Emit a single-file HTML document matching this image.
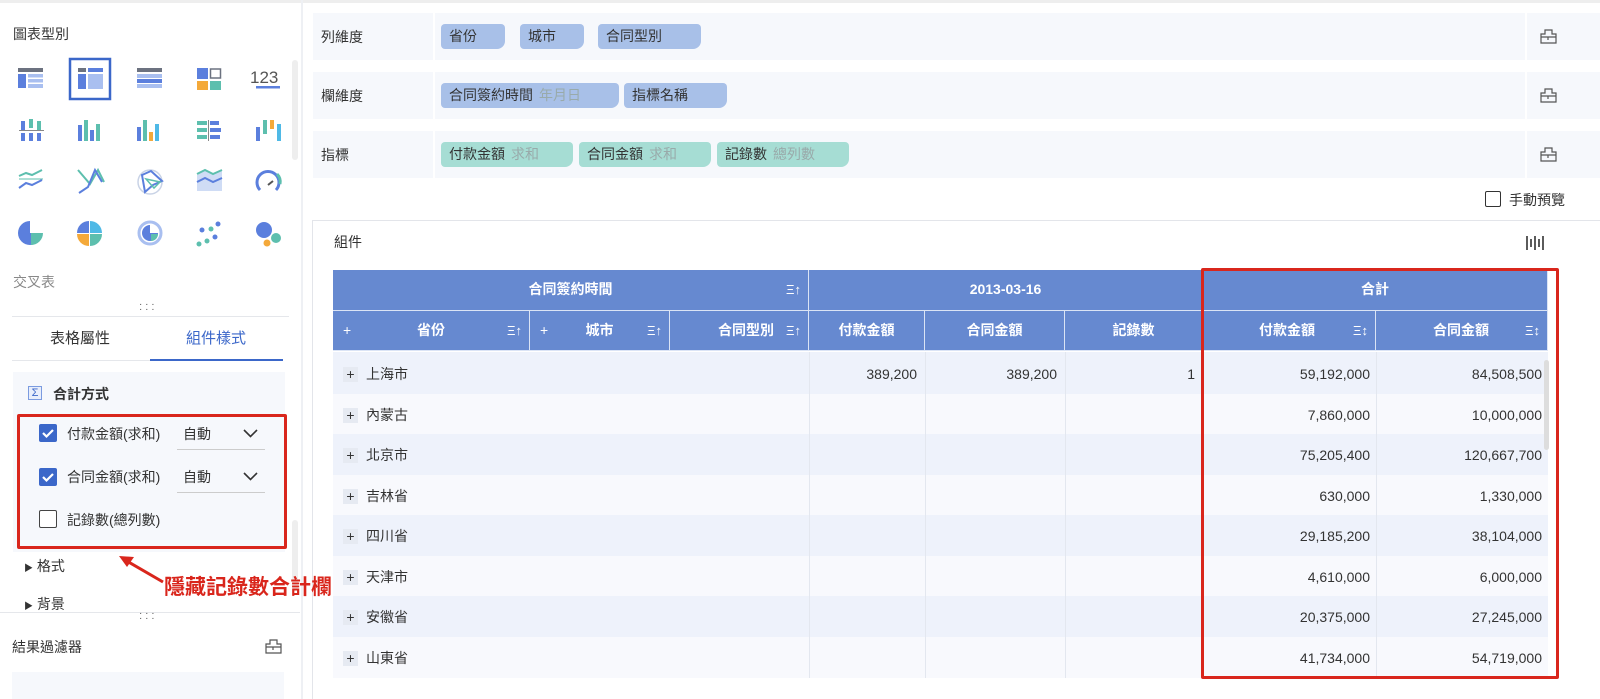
<!DOCTYPE html>
<html><head><meta charset="utf-8"><style>
*{box-sizing:border-box;margin:0;padding:0}
body{width:1600px;height:699px;overflow:hidden;background:#fff;font-family:"Liberation Sans","Noto Sans CJK TC",sans-serif;color:#333;font-size:14px;position:relative}
.a{position:absolute}
.row{position:absolute;left:313px;width:1287px;height:47px;background:#f6f8fc}
.row .lb{position:absolute;left:8px;top:14px;font-size:14px;color:#333}
.row .sep{position:absolute;left:120px;top:0;width:2px;height:47px;background:#fff}
.row .sep2{position:absolute;left:1212px;top:0;width:2px;height:47px;background:#fff}
.chip{position:absolute;top:11px;height:25px;border-radius:4px 4px 8px 4px;font-size:14px;line-height:25px;padding-left:8px;color:#333}
.b{background:#a8c0e8}.g{background:#a6ddd4}
.chip i{font-style:normal;color:#9aa;margin-left:6px}
.th{position:absolute;background:#6689d0;color:#fff;font-size:14px;font-weight:bold;text-align:center;line-height:39px;border-right:1px solid #dbe4f5;border-bottom:1px solid #dbe4f5}
.sort{position:absolute;right:7px;top:0;font-weight:normal;font-size:13px}
.plus{display:inline-block;width:15px;height:15px;line-height:14px;text-align:center;background:#e6eaf2;margin:0 8px 0 10px;font-size:14px}
</style></head><body>
<div class="a" style="left:0;top:0;width:1600px;height:3px;background:#eee"></div>
<div class="a" style="left:13px;top:24px;font-size:14px">圖表型別</div>
<div class="a" style="left:292px;top:60px;width:6px;height:100px;background:#eee;border-radius:3px"></div>
<div class="a" style="left:301px;top:0;width:2px;height:699px;background:#eef0f4"></div>
<svg class="a" style="left:0;top:50px" width="290" height="210">
<g transform="translate(18,18)"><rect width="25" height="4" fill="#6c7280"/><rect y="6" width="8" height="14" fill="#5b7fdd"/><rect x="10" y="6" width="15" height="3.5" fill="#a9bff0"/><rect x="10" y="11" width="15" height="3.5" fill="#a9bff0"/><rect x="10" y="16" width="15" height="4" fill="#a9bff0"/></g>
<rect x="70" y="9" width="40" height="40" fill="none" stroke="#3b67c9" stroke-width="2.5"/>
<g transform="translate(78,18)"><rect width="8" height="4" fill="#6c7280"/><rect x="10" width="15" height="4" fill="#5b7fdd"/><rect y="6" width="8" height="15" fill="#5b7fdd"/><rect x="10" y="6" width="15" height="15" fill="#a9bff0"/></g>
<g transform="translate(137,18)"><rect width="25" height="4" fill="#6c7280"/><rect y="6" width="25" height="4" fill="#a9bff0"/><rect y="11" width="25" height="4" fill="#5b7fdd"/><rect y="16" width="25" height="4" fill="#a9bff0"/></g>
<g transform="translate(197,18)"><rect width="11" height="11" fill="#5b7fdd"/><rect x="13.5" y="1" width="10" height="9" fill="none" stroke="#6c7280" stroke-width="1.5"/><rect y="13" width="11" height="9" fill="#f4a93a"/><rect x="13" y="13" width="11" height="9" fill="#5dbfae"/></g>
<text x="250" y="33" font-size="17" fill="#555" font-family="Liberation Sans">123</text><rect x="256" y="36" width="24" height="2.5" fill="#5b7fdd"/>
<g fill="#5b7fdd"><rect x="21" y="71" width="4" height="9"/><rect x="29" y="69" width="4" height="9" fill="#5dbfae"/><rect x="37" y="71" width="4" height="9" fill="#5dbfae"/><rect x="19" y="80" width="25" height="1" fill="#888"/><rect x="21" y="83" width="4" height="8"/><rect x="29" y="83" width="4" height="8"/><rect x="37" y="83" width="4" height="8"/>
<rect x="78" y="75" width="4" height="16"/><rect x="84" y="70" width="4" height="21" fill="#5dbfae"/><rect x="90" y="80" width="4" height="11"/><rect x="96" y="74" width="4" height="17" fill="#5dbfae"/>
<rect x="137" y="77" width="4" height="14"/><rect x="143" y="70" width="4" height="21" fill="#5dbfae"/><rect x="149" y="82" width="4" height="9" fill="#f4a93a"/><rect x="155" y="74" width="4" height="17" fill="#4fb9e6"/>
<rect x="197" y="71" width="10" height="4" fill="#5dbfae"/><rect x="210" y="71" width="9" height="4"/><rect x="197" y="78" width="10" height="4" fill="#5dbfae"/><rect x="210" y="78" width="11" height="4"/><rect x="197" y="85" width="10" height="4" fill="#5dbfae"/><rect x="210" y="85" width="10" height="4"/><rect x="208" y="70" width="1" height="21" fill="#888"/>
<rect x="256" y="77" width="4" height="14"/><rect x="263" y="70" width="4" height="14" fill="#5dbfae"/><rect x="270" y="70" width="4" height="9" fill="#f4a93a"/><rect x="277" y="74" width="4" height="17" fill="#4fb9e6"/></g>
<g fill="none" stroke-width="2"><path d="M19 126l7-3 6 2 10-5" stroke="#5dbfae"/><path d="M19 129h24" stroke="#5dbfae" stroke-width="1"/><path d="M19 138l7-5 6 2 10-5" stroke="#5b7fdd"/>
<path d="M78 120l12 14 8-14 6 12" stroke="#5dbfae"/><path d="M79 143l9-6 7-17 7 12" stroke="#5b7fdd"/>
<circle cx="150" cy="132" r="12" stroke="#c9d3e6" stroke-width="1.5"/><path d="M142 125l9-4 11 10-9 4-8 7z" stroke="#5b7fdd"/><path d="M146 129l14 3-6 6z" stroke="#5dbfae" stroke-width="1.5"/>
<path d="M197 125l8-4 8 4 9-4v20h-25z" fill="#cfdcf5" stroke="none"/><path d="M197 124l8-4 8 4 9-4" stroke="#5dbfae"/><path d="M197 132l8-4 8 4 9-4" stroke="#5b7fdd"/>
<path d="M260 140a11 11 0 1 1 16 0" stroke="#5b7fdd" stroke-width="3"/><path d="M277 124a11 11 0 0 1 3 10" stroke="#5dbfae" stroke-width="3"/><path d="M268 135l5-4" stroke="#555"/></g>
<path d="M30 171a12 12 0 1 0 12 12h-12z" fill="#5b7fdd"/><path d="M31 183h12a12 12 0 0 1-12 12z" fill="#5dbfae"/>
<path d="M89 171a12 12 0 0 0-12 12h12z" fill="#5b7fdd"/><path d="M90 171a12 12 0 0 1 12 12h-12z" fill="#4fb9e6"/><path d="M77 184a12 12 0 0 0 12 12v-12z" fill="#f4a93a"/><path d="M90 184h12a12 12 0 0 1-12 12z" fill="#5dbfae"/>
<circle cx="150" cy="183" r="11" fill="none" stroke="#a9bff0" stroke-width="3"/><path d="M150 175a8 8 0 1 0 8 8h-8z" fill="#5b7fdd"/><path d="M151 184h7a7 7 0 0 1-7 7z" fill="#5dbfae"/>
<g fill="#5b7fdd"><circle cx="218" cy="174" r="2.5"/><circle cx="202" cy="180" r="2.5"/><circle cx="215" cy="187" r="2.5"/><circle cx="199" cy="194" r="2.5" fill="#5dbfae"/><circle cx="207" cy="191" r="2.5" fill="#5dbfae"/><circle cx="211" cy="179" r="2.5" fill="#5dbfae"/></g>
<circle cx="264" cy="180" r="8" fill="#5b7fdd"/><circle cx="276" cy="188" r="5" fill="#5dbfae"/><circle cx="267" cy="193" r="3.5" fill="#f4a93a"/>
</svg>
<div class="a" style="left:13px;top:272px;color:#888">交叉表</div>
<div class="a" style="left:12px;top:316px;width:277px;height:1px;background:#e5e7eb"></div>
<div class="a" style="left:139px;top:302px;font-size:10px;line-height:5px;color:#555">· · ·<br>· · ·</div>
<div class="a" style="left:50px;top:327px;font-size:15px">表格屬性</div>
<div class="a" style="left:186px;top:327px;font-size:15px;color:#3b67c9">組件樣式</div>
<div class="a" style="left:12px;top:360px;width:271px;height:1px;background:#e5e7eb"></div>
<div class="a" style="left:150px;top:359px;width:133px;height:2px;background:#3b67c9"></div>
<div class="a" style="left:13px;top:372px;width:272px;height:180px;background:#f6f8fc"></div>
<div class="a" style="left:28px;top:386px;width:14px;height:14px;border:1px solid #7b9be0;background:#e8eefb;font-size:11px;line-height:12px;text-align:center;color:#3b67c9">Σ</div>
<div class="a" style="left:53px;top:384px;font-weight:bold;font-size:14px">合計方式</div>
<div class="a" style="left:17px;top:414px;width:270px;height:135px;border:3px solid #d9261c;border-radius:2px"></div>
<svg class="a" style="left:39px;top:424px" width="18" height="18"><rect width="18" height="18" rx="2" fill="#3b67c9"/><path d="M4 9l3.5 3.5L14 6" fill="none" stroke="#fff" stroke-width="2.2"/></svg>
<div class="a" style="left:67px;top:424px;font-size:14px">付款金額(求和)</div>
<div class="a" style="left:183px;top:424px;font-size:14px">自動</div>
<svg class="a" style="left:243px;top:429px" width="15" height="9"><path d="M1 1l6.5 6.5L14 1" fill="none" stroke="#333" stroke-width="1.6"/></svg>
<div class="a" style="left:177px;top:449px;width:88px;height:1px;background:#ccc"></div>
<svg class="a" style="left:39px;top:468px" width="18" height="18"><rect width="18" height="18" rx="2" fill="#3b67c9"/><path d="M4 9l3.5 3.5L14 6" fill="none" stroke="#fff" stroke-width="2.2"/></svg>
<div class="a" style="left:67px;top:467px;font-size:14px">合同金額(求和)</div>
<div class="a" style="left:183px;top:467px;font-size:14px">自動</div>
<svg class="a" style="left:243px;top:472px" width="15" height="9"><path d="M1 1l6.5 6.5L14 1" fill="none" stroke="#333" stroke-width="1.6"/></svg>
<div class="a" style="left:177px;top:492px;width:88px;height:1px;background:#ccc"></div>
<div class="a" style="left:39px;top:510px;width:18px;height:18px;border:1.5px solid #444;border-radius:2px;background:#fff"></div>
<div class="a" style="left:67px;top:510px;font-size:14px">記錄數(總列數)</div>
<div class="a" style="left:292px;top:520px;width:6px;height:70px;background:#eee;border-radius:3px"></div>
<div class="a" style="left:24px;top:556px;font-size:14px"><span style="font-size:9px">▶</span> 格式</div>
<div class="a" style="left:24px;top:594px;font-size:14px"><span style="font-size:9px">▶</span> 背景</div>
<div class="a" style="left:0;top:612px;width:300px;height:1px;background:#e5e7eb"></div>
<div class="a" style="left:139px;top:611px;font-size:10px;line-height:5px;color:#555">· · ·<br>· · ·</div>
<div class="a" style="left:12px;top:637px;font-size:14px">結果過濾器</div>
<svg class="a" style="left:265px;top:639px" width="17" height="15"><path d="M5 1h7v4h4v9H1V5h4z M1 8h15 M8 8v3" fill="none" stroke="#555" stroke-width="1.2"/></svg>
<div class="a" style="left:12px;top:672px;width:272px;height:27px;background:#f6f8fc"></div>
<div class="row" style="top:13px"><div class="lb">列維度</div><div class="sep"></div><div class="sep2"></div>
<div class="chip b" style="left:128px;width:64px">省份</div><div class="chip b" style="left:207px;width:64px">城市</div><div class="chip b" style="left:285px;width:103px">合同型別</div>
<svg class="a" style="left:1227px;top:16px" width="17" height="15"><path d="M5 1h7v4h4v9H1V5h4z M1 8h15 M8 8v3" fill="none" stroke="#555" stroke-width="1.2"/></svg></div>
<div class="row" style="top:72px"><div class="lb">欄維度</div><div class="sep"></div><div class="sep2"></div>
<div class="chip b" style="left:128px;width:178px">合同簽約時間<i>年月日</i></div><div class="chip b" style="left:311px;width:103px">指標名稱</div>
<svg class="a" style="left:1227px;top:16px" width="17" height="15"><path d="M5 1h7v4h4v9H1V5h4z M1 8h15 M8 8v3" fill="none" stroke="#555" stroke-width="1.2"/></svg></div>
<div class="row" style="top:131px"><div class="lb">指標</div><div class="sep"></div><div class="sep2"></div>
<div class="chip g" style="left:128px;width:132px">付款金額<i>求和</i></div><div class="chip g" style="left:266px;width:132px">合同金額<i>求和</i></div><div class="chip g" style="left:404px;width:132px">記錄數<i>總列數</i></div>
<svg class="a" style="left:1227px;top:16px" width="17" height="15"><path d="M5 1h7v4h4v9H1V5h4z M1 8h15 M8 8v3" fill="none" stroke="#555" stroke-width="1.2"/></svg></div>
<div class="a" style="left:1485px;top:191px;width:16px;height:16px;border:1.5px solid #333;border-radius:2px"></div>
<div class="a" style="left:1509px;top:190px;font-size:14px;white-space:nowrap">手動預覽</div>
<div class="a" style="left:312px;top:220px;width:1288px;height:1px;background:#e3e5ea"></div>
<div class="a" style="left:312px;top:220px;width:1px;height:479px;background:#e3e5ea"></div>
<div class="a" style="left:334px;top:232px;font-size:14px">組件</div>
<svg class="a" style="left:1526px;top:235px" width="18" height="16"><path d="M1 1v14M5 4v8M9 1v14M13 4v8M17 1v14" stroke="#333" stroke-width="1.6"/></svg>
<div class="th" style="left:333px;top:270px;width:476px;height:41px">合同簽約時間<span class="sort">Ξ↑</span></div>
<div class="th" style="left:809px;top:270px;width:394px;height:41px">2013-03-16</div>
<div class="th" style="left:1203px;top:270px;width:345px;height:41px">合計</div>
<div class="th" style="left:333px;top:311px;width:197px;height:40px"><span style="position:absolute;left:10px;font-weight:normal">+</span>省份<span class="sort">Ξ↑</span></div>
<div class="th" style="left:530px;top:311px;width:140px;height:40px"><span style="position:absolute;left:10px;font-weight:normal">+</span>城市<span class="sort">Ξ↑</span></div>
<div class="th" style="left:670px;top:311px;width:139px;height:40px;text-align:right;padding-right:34px">合同型別<span class="sort">Ξ↑</span></div>
<div class="th" style="left:809px;top:311px;width:116px;height:40px">付款金額</div>
<div class="th" style="left:925px;top:311px;width:140px;height:40px">合同金額</div>
<div class="th" style="left:1065px;top:311px;width:138px;height:40px">記錄數</div>
<div class="th" style="left:1203px;top:311px;width:173px;height:40px;text-align:right;padding-right:60px">付款金額<span class="sort">Ξ↕</span></div>
<div class="th" style="left:1376px;top:311px;width:172px;height:40px;text-align:right;padding-right:58px">合同金額<span class="sort">Ξ↕</span></div>
<div class="a" style="left:333px;top:352px;width:1215px;height:326px">
<div style="position:absolute;left:0;top:0;width:1215px;height:42px;background:#eef2fb"></div>
<div style="position:absolute;left:0;top:42px;width:1215px;height:40px;background:#f8f9fd"></div>
<div style="position:absolute;left:0;top:82px;width:1215px;height:41px;background:#eef2fb"></div>
<div style="position:absolute;left:0;top:123px;width:1215px;height:40px;background:#f8f9fd"></div>
<div style="position:absolute;left:0;top:163px;width:1215px;height:41px;background:#eef2fb"></div>
<div style="position:absolute;left:0;top:204px;width:1215px;height:40px;background:#f8f9fd"></div>
<div style="position:absolute;left:0;top:244px;width:1215px;height:41px;background:#eef2fb"></div>
<div style="position:absolute;left:0;top:285px;width:1215px;height:41px;background:#f8f9fd"></div>
<div style="position:absolute;left:476px;top:0;width:1px;height:326px;background:#e3e7ef"></div>
<div style="position:absolute;left:592px;top:0;width:1px;height:326px;background:#e3e7ef"></div>
<div style="position:absolute;left:732px;top:0;width:1px;height:326px;background:#e3e7ef"></div>
<div style="position:absolute;left:870px;top:0;width:1px;height:326px;background:#e3e7ef"></div>
<div style="position:absolute;left:1043px;top:0;width:1px;height:326px;background:#e3e7ef"></div>
</div>
<div class="a" style="left:333px;top:354px;width:1215px;font-size:14px;color:#333;line-height:40.5px">
<div style="position:relative;height:40.5px"><span class="plus">+</span>上海市<span style="position:absolute;left:476px;width:116px;text-align:right;padding-right:8px">389,200</span><span style="position:absolute;left:592px;width:140px;text-align:right;padding-right:8px">389,200</span><span style="position:absolute;left:732px;width:138px;text-align:right;padding-right:8px">1</span><span style="position:absolute;left:870px;width:173px;text-align:right;padding-right:6px">59,192,000</span><span style="position:absolute;left:1043px;width:172px;text-align:right;padding-right:6px">84,508,500</span></div>
<div style="position:relative;height:40.5px"><span class="plus">+</span>內蒙古<span style="position:absolute;left:870px;width:173px;text-align:right;padding-right:6px">7,860,000</span><span style="position:absolute;left:1043px;width:172px;text-align:right;padding-right:6px">10,000,000</span></div>
<div style="position:relative;height:40.5px"><span class="plus">+</span>北京市<span style="position:absolute;left:870px;width:173px;text-align:right;padding-right:6px">75,205,400</span><span style="position:absolute;left:1043px;width:172px;text-align:right;padding-right:6px">120,667,700</span></div>
<div style="position:relative;height:40.5px"><span class="plus">+</span>吉林省<span style="position:absolute;left:870px;width:173px;text-align:right;padding-right:6px">630,000</span><span style="position:absolute;left:1043px;width:172px;text-align:right;padding-right:6px">1,330,000</span></div>
<div style="position:relative;height:40.5px"><span class="plus">+</span>四川省<span style="position:absolute;left:870px;width:173px;text-align:right;padding-right:6px">29,185,200</span><span style="position:absolute;left:1043px;width:172px;text-align:right;padding-right:6px">38,104,000</span></div>
<div style="position:relative;height:40.5px"><span class="plus">+</span>天津市<span style="position:absolute;left:870px;width:173px;text-align:right;padding-right:6px">4,610,000</span><span style="position:absolute;left:1043px;width:172px;text-align:right;padding-right:6px">6,000,000</span></div>
<div style="position:relative;height:40.5px"><span class="plus">+</span>安徽省<span style="position:absolute;left:870px;width:173px;text-align:right;padding-right:6px">20,375,000</span><span style="position:absolute;left:1043px;width:172px;text-align:right;padding-right:6px">27,245,000</span></div>
<div style="position:relative;height:40.5px"><span class="plus">+</span>山東省<span style="position:absolute;left:870px;width:173px;text-align:right;padding-right:6px">41,734,000</span><span style="position:absolute;left:1043px;width:172px;text-align:right;padding-right:6px">54,719,000</span></div>
</div>
<div class="a" style="left:1544px;top:360px;width:5px;height:90px;background:#ddd;border-radius:3px"></div>
<div class="a" style="left:1201px;top:268px;width:358px;height:411px;border:3px solid #d9261c;border-radius:2px"></div>
<svg class="a" style="left:115px;top:552px;z-index:5" width="60" height="40"><path d="M48 30L10 8" stroke="#d9261c" stroke-width="3"/><path d="M4 4l15 1-7 10z" fill="#d9261c"/></svg>
<div class="a" style="left:164px;top:571px;font-size:21px;font-weight:bold;color:#d9261c;white-space:nowrap;z-index:5">隱藏記錄數合計欄</div>
</body></html>
